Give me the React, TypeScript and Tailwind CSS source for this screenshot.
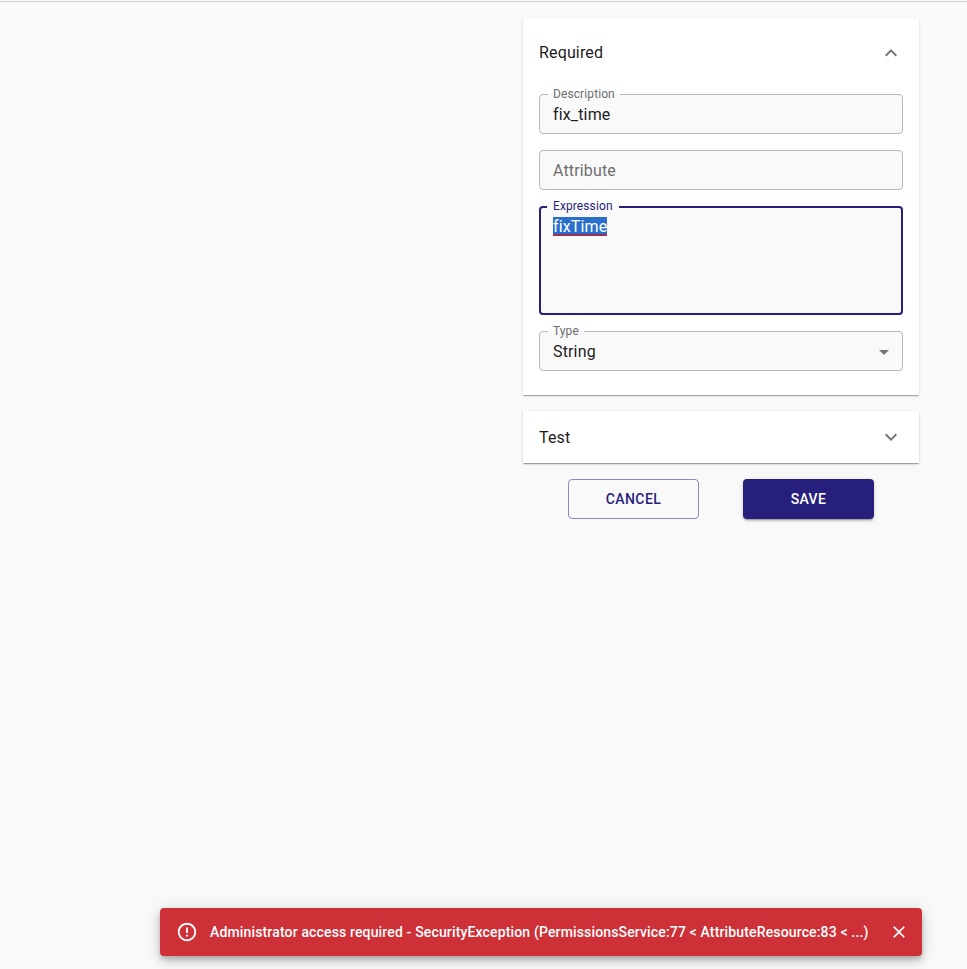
import React from "react";

const font = "font-['Roboto',sans-serif]";

function Chevron({ up }: { up?: boolean }) {
  return (
    <svg width="24" height="24" viewBox="0 0 24 24" className="fill-[#757575]">
      <path d={up ? "M12 8l-6 6 1.41 1.41L12 10.83l4.59 4.58L18 14z" : "M16.59 8.59L12 13.17 7.41 8.59 6 10l6 6 6-6z"} />
    </svg>
  );
}

function LabeledField({ label, children }: { label: string; children: React.ReactNode }) {
  return (
    <fieldset className="m-0 min-w-0 border border-[#b9b9b9] rounded-[4px] px-[13px] bg-[#f9f9f9] h-[47px]">
      <legend className="-ml-[5px] px-[5px] text-[12px] leading-[14px] tracking-[0.1px] text-[#6e6e6e] h-[14px]">{label}</legend>
      <div className="flex items-center justify-between h-[24px] mt-[2px] text-[16px] leading-[24px] tracking-[0.15px] text-[#1d1d1d]">{children}</div>
    </fieldset>
  );
}

export default function App() {
  return (
    <div className={`${font} relative min-h-[969px] bg-[#f9f9f9] pt-px overflow-hidden`}>
      <div className="border-t border-[#cfcfcf] flex justify-end pr-[48px] pt-[16px]">
        <div className="w-[396px] flex flex-col">
          <section className="bg-white rounded-t-[4px] shadow-[0_2px_1px_-1px_rgba(0,0,0,0.2),0_1px_1px_0_rgba(0,0,0,0.14),0_1px_3px_0_rgba(0,0,0,0.12)] pb-[24px]">
            <div className="flex items-center justify-between h-[69px] pl-[16px] pr-[16px]">
              <span className="text-[16px] tracking-[0.15px] text-[#1d1d1d]">Required</span>
              <Chevron up />
            </div>
            <div className="px-[16px] flex flex-col">
              <LabeledField label="Description">fix_time</LabeledField>
              <div className="mt-[16px] h-[40px] flex items-center border border-[#b9b9b9] rounded-[4px] px-[13px] pt-px bg-[#f9f9f9] text-[16px] tracking-[0.15px] text-[#6e6e6e]">Attribute</div>
              <fieldset className="mt-[9px] m-0 min-w-0 border-2 border-[#271f7c] rounded-[4px] px-[12px] bg-[#f9f9f9] h-[116px]">
                <legend className="-ml-[6px] px-[6px] text-[12px] leading-[14px] tracking-[0.1px] text-[#271f7c] h-[16px]">Expression</legend>
                <div className="text-[16px] leading-[19px] tracking-[0.15px] mt-[2px]">
                  <span className="relative inline-block h-[19px] bg-[#2b6fcd] text-white">
                    fixTime
                    <svg viewBox="0 0 54 2" preserveAspectRatio="none" className="absolute left-0 bottom-0 w-full h-[2px]">
                      <path d="M0 1.5 L2 0.5 L4 1.5 L6 0.5 L8 1.5 L10 0.5 L12 1.5 L14 0.5 L16 1.5 L18 0.5 L20 1.5 L22 0.5 L24 1.5 L26 0.5 L28 1.5 L30 0.5 L32 1.5 L34 0.5 L36 1.5 L38 0.5 L40 1.5 L42 0.5 L44 1.5 L46 0.5 L48 1.5 L50 0.5 L52 1.5 L54 0.5" fill="none" stroke="#f00000" strokeWidth="1" />
                    </svg>
                  </span>
                </div>
              </fieldset>
              <div className="mt-[9px]">
                <LabeledField label="Type">
                  <span>String</span>
                  <svg width="24" height="24" viewBox="0 0 24 24" className="fill-[#757575] -mr-[7px] -mt-[1px]">
                    <path d="M7 10l5 5 5-5z" />
                  </svg>
                </LabeledField>
              </div>
            </div>
          </section>
          <section className="mt-[16px] bg-white h-[52px] flex items-center justify-between px-[16px] shadow-[0_2px_1px_-1px_rgba(0,0,0,0.2),0_1px_1px_0_rgba(0,0,0,0.14),0_1px_3px_0_rgba(0,0,0,0.12)]">
            <span className="text-[16px] tracking-[0.15px] pt-px text-[#1d1d1d]">Test</span>
            <Chevron />
          </section>
          <div className="mt-[16px] flex justify-between pl-[45px] pr-[45px]">
            <button className="w-[131px] h-[40px] pt-px rounded-[4px] border border-[#8c88c4] text-[14px] font-medium tracking-[0.4px] text-[#271f7c]">CANCEL</button>
            <button className="w-[131px] h-[40px] pt-px rounded-[4px] bg-[#271f7c] text-[14px] font-medium tracking-[0.4px] text-white shadow-[0_3px_1px_-2px_rgba(0,0,0,0.2),0_2px_2px_0_rgba(0,0,0,0.14),0_1px_5px_0_rgba(0,0,0,0.12)]">SAVE</button>
          </div>
        </div>
      </div>
      <div className="absolute left-[160px] top-[908px] w-[762px] h-[48px] flex items-center rounded-[4px] bg-[#cd3037] text-white pl-[16px] pr-[13px] shadow-[0_3px_5px_-1px_rgba(0,0,0,0.2),0_6px_10px_0_rgba(0,0,0,0.14),0_1px_18px_0_rgba(0,0,0,0.12)]">
        <svg width="22" height="22" viewBox="0 0 24 24" className="fill-white shrink-0">
          <path d="M11 15h2v2h-2zm0-8h2v6h-2zm.99-5C6.47 2 2 6.48 2 12s4.47 10 9.99 10C17.52 22 22 17.52 22 12S17.52 2 11.99 2zM12 20c-4.42 0-8-3.58-8-8s3.58-8 8-8 8 3.58 8 8-3.58 8-8 8z" />
        </svg>
        <span className="ml-[12px] text-[14px] font-medium tracking-[0.15px] whitespace-nowrap">Administrator access required - SecurityException (PermissionsService:77 &lt; AttributeResource:83 &lt; ...)</span>
        <svg width="20" height="20" viewBox="0 0 24 24" className="fill-white ml-auto shrink-0">
          <path d="M19 6.41L17.59 5 12 10.59 6.41 5 5 6.41 10.59 12 5 17.59 6.41 19 12 13.41 17.59 19 19 17.59 13.41 12z" />
        </svg>
      </div>
    </div>
  );
}
